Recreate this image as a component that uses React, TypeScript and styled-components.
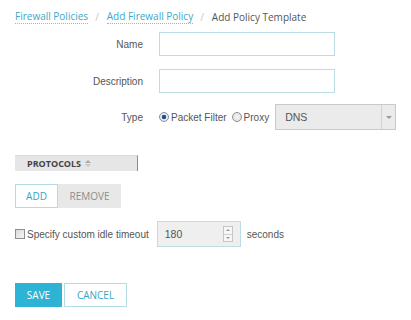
import React from "react";
import styled, { createGlobalStyle } from "styled-components";

const Global = createGlobalStyle`
  html, body { margin: 0; padding: 0; background: #fff; }
  body { width: 411px; height: 320px; overflow: hidden; }
`;

const Page = styled.div`
  padding: 9px 0 0 15px;
  font-family: "Liberation Sans", Arial, sans-serif;
  font-size: 10px;
  color: #555;
`;

const Crumbs = styled.div`
  display: flex;
  align-items: center;
  font-family: "Open Sans", sans-serif;
  font-size: 10px;
  line-height: 14px;
  color: #555;
  height: 15px;
`;

const CrumbLink = styled.span`
  color: #3ca8c8;
  border-bottom: 1px dotted #7cc4da;
  line-height: 13px;
`;

const Sep = styled.span`
  color: #c8c8c8;
  margin: 0 8px 0 7px;
`;

const Row = styled.div<{ $mt: number }>`
  display: flex;
  align-items: center;
  margin-top: ${(p) => p.$mt}px;
`;

const Label = styled.div`
  width: 128px;
  text-align: right;
  margin-right: 16px;
  color: #555;
`;

const TextInput = styled.div`
  box-sizing: border-box;
  width: 176px;
  height: 24px;
  border: 1px solid #b9dce5;
  background: #fff;
`;

const Radio = styled.span<{ $on?: boolean }>`
  box-sizing: border-box;
  display: inline-block;
  width: 10px;
  height: 10px;
  border-radius: 50%;
  border: 1px solid #8a8f99;
  background: radial-gradient(circle, ${(p) => (p.$on ? "#1c3f78 0, #2b5aa0 2px, #e8eef6 2.6px" : "#f4f4f4 0")}, #dcdcdc 100%);
  margin-right: 2px;
`;

const RadioLabel = styled.span<{ $mr: number }>`
  display: inline-flex;
  align-items: center;
  font-size: 10px;
  color: #555;
  margin-right: ${(p) => p.$mr}px;
`;

const Select = styled.div`
  box-sizing: border-box;
  width: 121px;
  height: 26px;
  display: flex;
  background: #ebebeb;
  border: 1px solid #c9c9c9;
`;

const SelectValue = styled.div`
  flex: 1;
  display: flex;
  align-items: center;
  padding-left: 9px;
  font-size: 10.5px;
  color: #555;
`;

const SelectArrow = styled.div`
  width: 13px;
  border-left: 1px solid #d4d4d4;
  display: flex;
  align-items: center;
  justify-content: center;
  &::after {
    content: "";
    border-left: 3px solid transparent;
    border-right: 3px solid transparent;
    border-top: 3px solid #9a9a9a;
  }
`;

const TableHead = styled.div`
  box-sizing: border-box;
  width: 123px;
  height: 16px;
  margin-top: 25px;
  background: #e6e6e6;
  border-top: 1px solid #dcdcdc;
  border-right: 1px solid #8c8c8c;
  display: flex;
  align-items: center;
  padding-left: 12px;
  font-family: "Open Sans", sans-serif;
  font-weight: 700;
  font-size: 9px;
  color: #444;
`;

const SortIcon = styled.span`
  display: inline-flex;
  flex-direction: column;
  gap: 1px;
  margin-left: 4px;
  &::before {
    content: "";
    border-left: 3px solid transparent;
    border-right: 3px solid transparent;
    border-bottom: 3px solid #a8a8a8;
  }
  &::after {
    content: "";
    border-left: 3px solid transparent;
    border-right: 3px solid transparent;
    border-top: 3px solid #c8c8c8;
  }
`;

const BtnGroup = styled.div<{ $mt: number; $gap: number }>`
  display: flex;
  gap: ${(p) => p.$gap}px;
  margin-top: ${(p) => p.$mt}px;
`;

const Btn = styled.div<{ $w: number; $kind: "outline" | "muted" | "solid" }>`
  box-sizing: border-box;
  width: ${(p) => p.$w}px;
  height: 24px;
  display: flex;
  align-items: center;
  justify-content: center;
  font-family: "Open Sans", sans-serif;
  font-size: 10px;
  ${(p) =>
    p.$kind === "outline"
      ? "background:#fff;border:1px solid #b5dbe5;color:#35a5c6;"
      : p.$kind === "muted"
      ? "background:#e8e8e8;border:1px solid #e8e8e8;color:#8d8d8d;"
      : "background:#2db3d3;border:1px solid #2db3d3;color:#fff;"}
`;

const Check = styled.span`
  box-sizing: border-box;
  display: inline-block;
  width: 10px;
  height: 10px;
  border: 1px solid #8f8f8f;
  background: linear-gradient(135deg, #dadada, #f6f6f6);
  margin-right: 2px;
`;

const CheckLabel = styled.span`
  display: inline-flex;
  align-items: center;
  color: #555;
  margin-right: 8px;
`;

const NumberBox = styled.div`
  box-sizing: border-box;
  width: 84px;
  height: 26px;
  background: #efefef;
  border: 1px solid #bcdde5;
  display: flex;
  align-items: center;
  padding-left: 7px;
  font-size: 10.5px;
  color: #555;
`;

const NumValue = styled.span`
  flex: 1;
`;

const Spinner = styled.div`
  box-sizing: border-box;
  width: 10px;
  height: 16px;
  margin-right: 7px;
  border: 1px solid #c6c6c6;
  background: #f7f7f7;
  display: flex;
  flex-direction: column;
`;

const SpinHalf = styled.div<{ $up?: boolean }>`
  flex: 1;
  display: flex;
  align-items: center;
  justify-content: center;
  ${(p) => (p.$up ? "border-bottom: 1px solid #d0d0d0;" : "")}
  &::after {
    content: "";
    border-left: 2px solid transparent;
    border-right: 2px solid transparent;
    ${(p) => (p.$up ? "border-bottom: 2px solid #999;" : "border-top: 2px solid #999;")}
  }
`;

const Unit = styled.span`
  margin-left: 6px;
  color: #555;
`;

export default function App() {
  return (
    <>
      <Global />
      <Page>
        <Crumbs>
          <CrumbLink>Firewall Policies</CrumbLink>
          <Sep>/</Sep>
          <CrumbLink>Add Firewall Policy</CrumbLink>
          <Sep>/</Sep>
          <span>Add Policy Template</span>
        </Crumbs>
        <Row $mt={8}>
          <Label>Name</Label>
          <TextInput />
        </Row>
        <Row $mt={13}>
          <Label>Description</Label>
          <TextInput />
        </Row>
        <Row $mt={11}>
          <Label>Type</Label>
          <RadioLabel $mr={5}>
            <Radio $on />
            Packet Filter
          </RadioLabel>
          <RadioLabel $mr={6}>
            <Radio />
            Proxy
          </RadioLabel>
          <Select>
            <SelectValue>DNS</SelectValue>
            <SelectArrow />
          </Select>
        </Row>
        <TableHead>
          PROTOCOLS
          <SortIcon />
        </TableHead>
        <BtnGroup $mt={13} $gap={0}>
          <Btn $w={43} $kind="outline">ADD</Btn>
          <Btn $w={63} $kind="muted">REMOVE</Btn>
        </BtnGroup>
        <Row $mt={13}>
          <CheckLabel>
            <Check />
            Specify custom idle timeout
          </CheckLabel>
          <NumberBox>
            <NumValue>180</NumValue>
            <Spinner>
              <SpinHalf $up />
              <SpinHalf />
            </Spinner>
          </NumberBox>
          <Unit>seconds</Unit>
        </Row>
        <BtnGroup $mt={36} $gap={2}>
          <Btn $w={47} $kind="solid">SAVE</Btn>
          <Btn $w={63} $kind="outline">CANCEL</Btn>
        </BtnGroup>
      </Page>
    </>
  );
}
